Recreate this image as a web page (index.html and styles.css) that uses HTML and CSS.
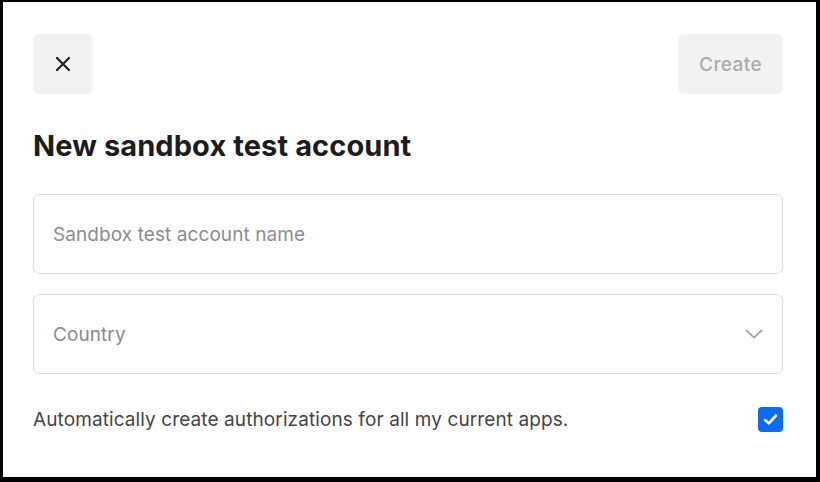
FILE: index.html
```html
<!DOCTYPE html>
<html>
<head>
<meta charset="utf-8">
<link rel="stylesheet" href="styles.css">
</head>
<body>
<div class="frame">
  <div class="toolbar">
    <button class="icon-btn" aria-label="Close">
      <svg width="16" height="16" viewBox="0 0 16 16"><path d="M2 2 L14 14 M14 2 L2 14" stroke="#222" stroke-width="2.2" stroke-linecap="round" fill="none"/></svg>
    </button>
    <button class="create-btn">Create</button>
  </div>
  <h1 class="title">New sandbox test account</h1>
  <div class="field">
    <span class="placeholder">Sandbox test account name</span>
  </div>
  <div class="field select">
    <span class="placeholder">Country</span>
    <svg class="chevron" width="18" height="10" viewBox="0 0 18 10"><path d="M1.5 1.5 L9 8.5 L16.5 1.5" stroke="#a8a8a8" stroke-width="1.8" stroke-linecap="round" stroke-linejoin="round" fill="none"/></svg>
  </div>
  <div class="check-row">
    <span class="check-label">Automatically create authorizations for all my current apps.</span>
    <span class="checkbox">
      <svg width="15" height="13" viewBox="0 0 15 13"><path d="M2 7 L5.8 10.3 L13 2.5" stroke="#fff" stroke-width="2.6" stroke-linecap="round" stroke-linejoin="round" fill="none"/></svg>
    </span>
  </div>
</div>
</body>
</html>
```
FILE: styles.css
```css
* { box-sizing: border-box; }
html, body { margin: 0; padding: 0; background: #fff; }
body { font-family: Inter, "Noto Sans", sans-serif; }
.frame {
  width: 820px;
  height: 482px;
  border-style: solid;
  border-color: #000;
  border-width: 2px 4px 5px 3px;
  padding: 32px 33px 0 30px;
  background: #fff;
}
.toolbar {
  display: flex;
  justify-content: space-between;
  align-items: center;
}
.icon-btn {
  width: 60px;
  height: 60px;
  border: none;
  border-radius: 6px;
  background: #f2f2f2;
  display: flex;
  align-items: center;
  justify-content: center;
  padding: 0;
}
.create-btn {
  width: 105px;
  height: 60px;
  border: none;
  border-radius: 6px;
  background: #f2f2f2;
  color: #ababab;
  font-family: Inter, sans-serif;
  font-size: 19px;
  letter-spacing: 0.4px;
  font-weight: 500;
  padding: 0;
}
.title {
  margin: 34px 0 31px;
  font-size: 29px;
  line-height: 35px;
  font-weight: 700;
  color: #1c1c1c;
  letter-spacing: 0.1px;
}
.field {
  height: 80px;
  border: 1px solid #dcdcdc;
  border-radius: 6px;
  display: flex;
  align-items: center;
  padding: 0 19px;
  margin-bottom: 20px;
}
.placeholder {
  font-size: 19px;
  color: #8c8c8c;
  letter-spacing: 0.08px;
}
.select { justify-content: space-between; }
.check-row {
  display: flex;
  justify-content: space-between;
  align-items: center;
  margin-top: 33px;
}
.check-label {
  font-size: 19px;
  color: #444;
  letter-spacing: 0.1px;
}
.checkbox {
  width: 25px;
  height: 25px;
  border-radius: 4px;
  background: #0a6cf5;
  display: flex;
  align-items: center;
  justify-content: center;
}
```
